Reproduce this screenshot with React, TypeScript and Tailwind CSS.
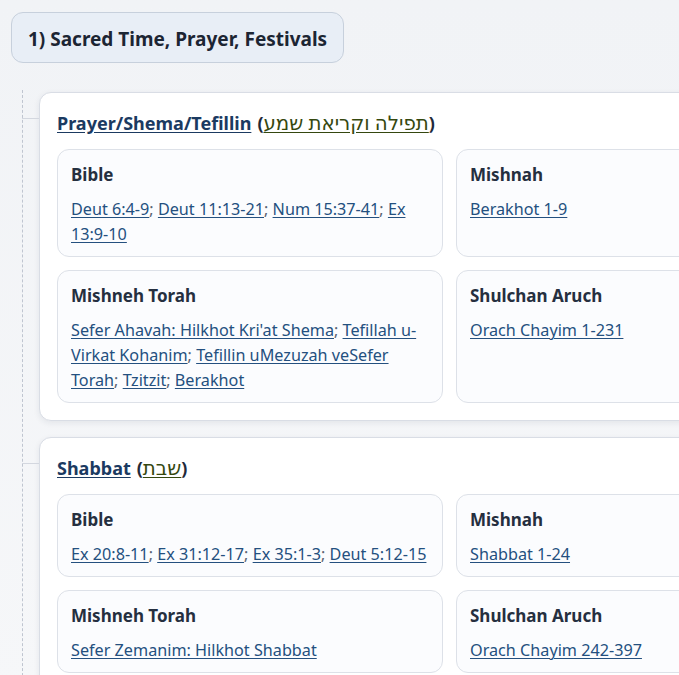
import React from 'react';

interface Box {
  label: string;
  refs: string[];
}

interface Topic {
  title: string;
  hebrew: string;
  boxes: Box[];
}

const topics: Topic[] = [
  {
    title: 'Prayer/Shema/Tefillin',
    hebrew: 'תפילה וקריאת שמע',
    boxes: [
      { label: 'Bible', refs: ['Deut 6:4-9', 'Deut 11:13-21', 'Num 15:37-41', 'Ex 13:9-10'] },
      { label: 'Mishnah', refs: ['Berakhot 1-9'] },
      {
        label: 'Mishneh Torah',
        refs: [
          "Sefer Ahavah: Hilkhot Kri'at Shema",
          'Tefillah u-Virkat Kohanim',
          'Tefillin uMezuzah veSefer Torah',
          'Tzitzit',
          'Berakhot',
        ],
      },
      { label: 'Shulchan Aruch', refs: ['Orach Chayim 1-231'] },
    ],
  },
  {
    title: 'Shabbat',
    hebrew: 'שבת',
    boxes: [
      { label: 'Bible', refs: ['Ex 20:8-11', 'Ex 31:12-17', 'Ex 35:1-3', 'Deut 5:12-15'] },
      { label: 'Mishnah', refs: ['Shabbat 1-24'] },
      { label: 'Mishneh Torah', refs: ['Sefer Zemanim: Hilkhot Shabbat'] },
      { label: 'Shulchan Aruch', refs: ['Orach Chayim 242-397'] },
    ],
  },
];

const SourceBox: React.FC<{ box: Box }> = ({ box }) => (
  <div className="rounded-xl border border-[#dde1e8] bg-[#fbfcfe] px-[13px] pt-[13px] pb-[9px]">
    <div className="text-[17px] font-bold leading-6 text-[#252f3f]">{box.label}</div>
    <div className="mt-[10px] text-[16.2px] leading-[25px] text-[#5a6372]">
      {box.refs.map((r, i) => (
        <React.Fragment key={r}>
          <a href="#" className="text-[#24507f] underline underline-offset-2 decoration-1">
            {r}
          </a>
          {i < box.refs.length - 1 && '; '}
        </React.Fragment>
      ))}
    </div>
  </div>
);

const TopicCard: React.FC<{ topic: Topic }> = ({ topic }) => (
  <div className="relative">
    <div className="absolute left-[-17px] top-[26px] h-px w-[17px] bg-[#d3d7df]" />
    <div className="w-[821px] rounded-xl border border-[#d9dde5] bg-white px-[17px] pt-[17px] pb-[17px] shadow-[0_2px_6px_rgba(30,40,60,0.08)]">
      <h2 className="mb-[13px] flex h-[26px] items-center text-[18px] font-bold text-[#1f2a3a]">
        <a href="#" className="text-[#1b3a61] underline underline-offset-2">
          {topic.title}
        </a>
        <span className="ml-[6px]">(</span>
        <a href="#" dir="rtl" className="text-[19.8px] font-normal leading-[26px] text-[#35480f] underline underline-offset-2">
          {topic.hebrew}
        </a>
        <span>)</span>
      </h2>
      <div className="grid grid-cols-2 gap-[13px]">
        {topic.boxes.map((b) => (
          <SourceBox key={b.label} box={b} />
        ))}
      </div>
    </div>
  </div>
);

export default function App() {
  return (
    <div
      className="min-h-screen overflow-hidden bg-gradient-to-b from-[#f1f3f6] to-[#f6f7f9]"
      style={{ fontFamily: '"Noto Sans", "DejaVu Sans", sans-serif' }}
    >
      <div className="pl-[11px] pt-3">
        <div className="inline-flex h-[51px] items-center rounded-xl border border-[#c7d0dc] bg-[#e8eef6] px-4 pt-1 text-[19px] font-bold text-[#1c2533]">
          1) Sacred Time, Prayer, Festivals
        </div>
      </div>
      <div className="ml-[22px] mt-[27px] flex flex-col gap-4 border-l border-dashed border-[#bfc5d0] pl-4 pt-[2px]">
        {topics.map((t) => (
          <TopicCard key={t.title} topic={t} />
        ))}
      </div>
    </div>
  );
}
